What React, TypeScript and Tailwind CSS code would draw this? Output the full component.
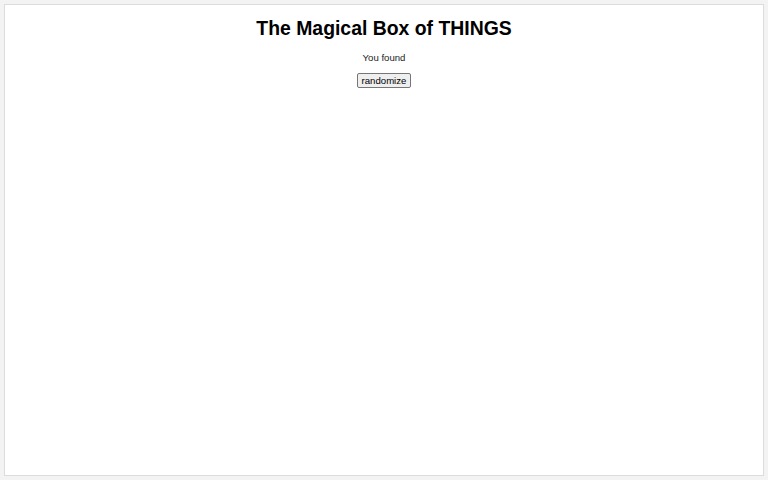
export default function App() {
  return (
    <div className="h-[480px] w-[768px] bg-[#f3f3f3] p-[4px] font-['Liberation_Sans',Arial,sans-serif]">
      <div className="flex h-full flex-col items-center border border-[#dcdcdc] bg-white">
        <h1 className="mt-[11px] text-[19.4px] font-bold leading-[24px] text-black">
          The Magical Box of THINGS
        </h1>
        <p className="mt-[12px] text-[9.6px] leading-[12px] text-[#222]">You found</p>
        <button className="mt-[9px] rounded-[2px] border border-[#767676] bg-[#efefef] px-[4px] text-[9.6px] leading-[13px] text-black">
          randomize
        </button>
      </div>
    </div>
  );
}
